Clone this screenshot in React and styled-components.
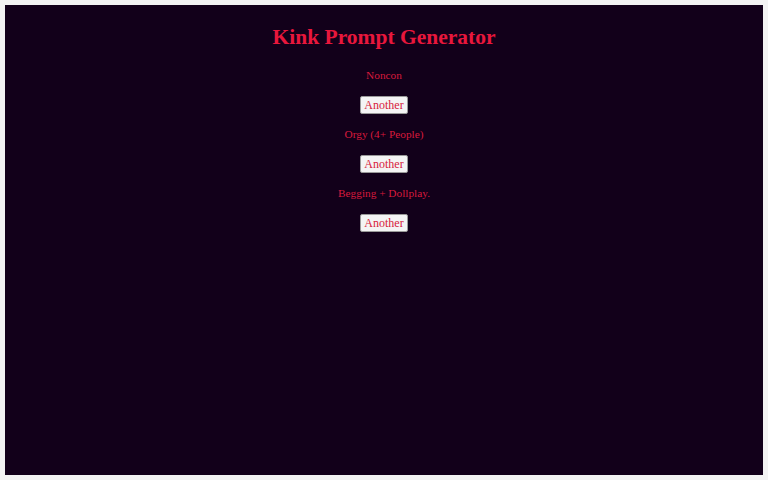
import styled, { createGlobalStyle } from "styled-components";

const GlobalStyle = createGlobalStyle`
  html, body {
    margin: 0;
    padding: 0;
    background: #f3f3f3;
  }
  body {
    padding: 5px;
    font-family: "Liberation Serif", "DejaVu Serif", serif;
  }
`;

const Panel = styled.main`
  background-color: #12001a;
  width: 758px;
  height: 470px;
  box-sizing: border-box;
  padding-top: 19px;
  display: flex;
  flex-direction: column;
  align-items: center;
  gap: 13px;
`;

const Title = styled.h1`
  margin: 0 0 5px;
  color: #e8173c;
  font-size: 21.5px;
  line-height: 26px;
  font-weight: bold;
`;

const Prompt = styled.p`
  margin: 0;
  color: #d81a3c;
  font-size: 11.3px;
  line-height: 15px;
`;

const AnotherButton = styled.button`
  height: 18px;
  padding: 0 3px;
  border: 1px solid #9a9a9a;
  border-radius: 2px;
  background: #f4f4f4;
  color: #d81a3c;
  font-family: "Liberation Serif", "DejaVu Serif", serif;
  font-size: 12px;
  line-height: 16px;
  cursor: pointer;
`;

const prompts = ["Noncon", "Orgy (4+ People)", "Begging + Dollplay."];

const App = () => {
  return (
    <>
      <GlobalStyle />
      <Panel>
        <Title>Kink Prompt Generator</Title>
        {prompts.map((p) => (
          <>
            <Prompt key={p}>{p}</Prompt>
            <AnotherButton>Another</AnotherButton>
          </>
        ))}
      </Panel>
    </>
  );
};

export default App;
